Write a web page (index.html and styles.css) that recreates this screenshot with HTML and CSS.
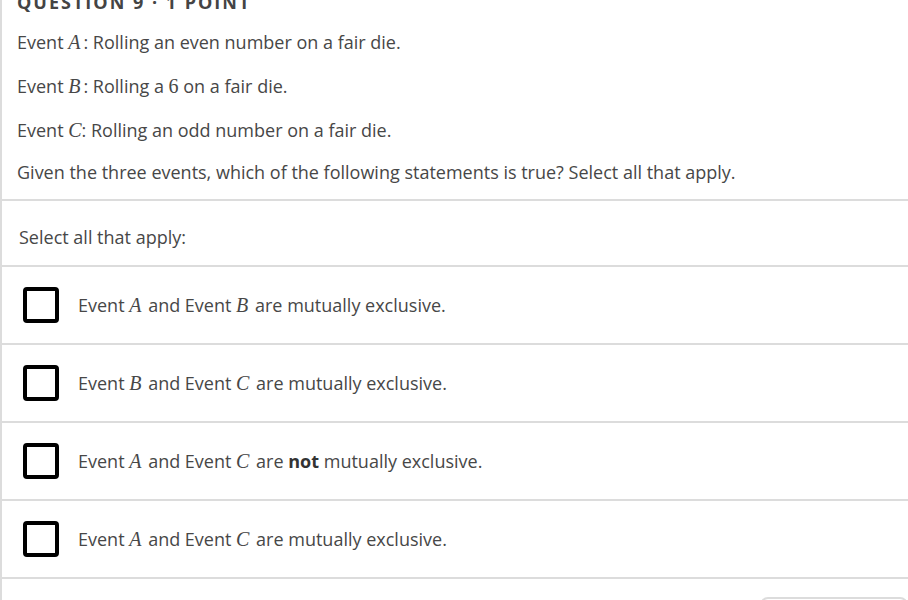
FILE: index.html
```html
<!DOCTYPE html>
<html>
<head>
<meta charset="utf-8">
<link rel="stylesheet" href="styles.css">
</head>
<body>
<div class="page">
  <div class="stem">
    <h2 class="qhead">QUESTION 9 · 1 POINT</h2>
    <p>Event <span class="mv">A</span><span class="mc">:</span> Rolling an even number on a fair die.</p>
    <p>Event <span class="mv">B</span><span class="mc">:</span> Rolling a <span class="mn">6</span> on a fair die.</p>
    <p>Event <span class="mv">C</span>: Rolling an odd number on a fair die.</p>
    <p class="ask">Given the three events, which of the following statements is true? Select all that apply.</p>
  </div>
  <div class="select-label">Select all that apply:</div>
  <ul class="options">
    <li class="option"><span class="box"></span><span class="otext">Event <span class="mv">A</span> and Event <span class="mv">B</span> are mutually exclusive.</span></li>
    <li class="option"><span class="box"></span><span class="otext">Event <span class="mv">B</span> and Event <span class="mv">C</span> are mutually exclusive.</span></li>
    <li class="option"><span class="box"></span><span class="otext">Event <span class="mv">A</span> and Event <span class="mv">C</span> are <strong>not</strong> mutually exclusive.</span></li>
    <li class="option"><span class="box"></span><span class="otext">Event <span class="mv">A</span> and Event <span class="mv">C</span> are mutually exclusive.</span></li>
  </ul>
  <div class="footer"><span class="btn"></span></div>
</div>
</body>
</html>
```
FILE: styles.css
```css
html, body {
  margin: 0;
  padding: 0;
  background: #fff;
  overflow: hidden;
}
body {
  font-family: "Open Sans", "Liberation Sans", sans-serif;
  color: #474747;
  font-size: 18px;
}
.page {
  border-left: 2px solid #dcdcdc;
  min-height: 600px;
}
.stem {
  padding: 0 15px 14px 15px;
  border-bottom: 2px solid #dcdcdc;
}
.qhead {
  margin: -10px 0 0 0;
  font-size: 18px;
  font-weight: 700;
  letter-spacing: 2px;
  color: #444;
  line-height: 24px;
}
.stem p {
  margin: 0 0 19px 0;
  line-height: 25px;
}
.stem p:first-of-type {
  margin-top: 16px;
}
.stem p.ask {
  margin-top: -2px;
  margin-bottom: 0;
}
.mv {
  font-family: "Liberation Serif", "DejaVu Serif", serif;
  font-style: italic;
  font-size: 20px;
}
.mn {
  font-family: "Liberation Serif", "DejaVu Serif", serif;
  font-size: 20px;
}
.mc {
  margin-left: 3px;
}
.select-label {
  height: 66px;
  box-sizing: border-box;
  padding: 24px 17px 0 17px;
  border-bottom: 2px solid #dcdcdc;
  line-height: 25px;
}
.options {
  list-style: none;
  margin: 0;
  padding: 0;
}
.option {
  display: flex;
  align-items: center;
  height: 78px;
  box-sizing: border-box;
  border-bottom: 2px solid #dcdcdc;
  padding-left: 21px;
  gap: 19px;
}
.box {
  width: 36px;
  height: 36px;
  box-sizing: border-box;
  border: 4px solid #000;
  border-radius: 4px;
  flex: none;
}
.otext {
  line-height: 25px;
}
.otext .mv {
  margin-right: 2px;
}
.otext strong {
  font-weight: 700;
  color: #333;
}
.footer {
  display: flex;
  justify-content: flex-end;
  padding-top: 18px;
}
.btn {
  width: 144px;
  height: 40px;
  border: 2px solid #dcdcdc;
  border-radius: 8px;
}
```
